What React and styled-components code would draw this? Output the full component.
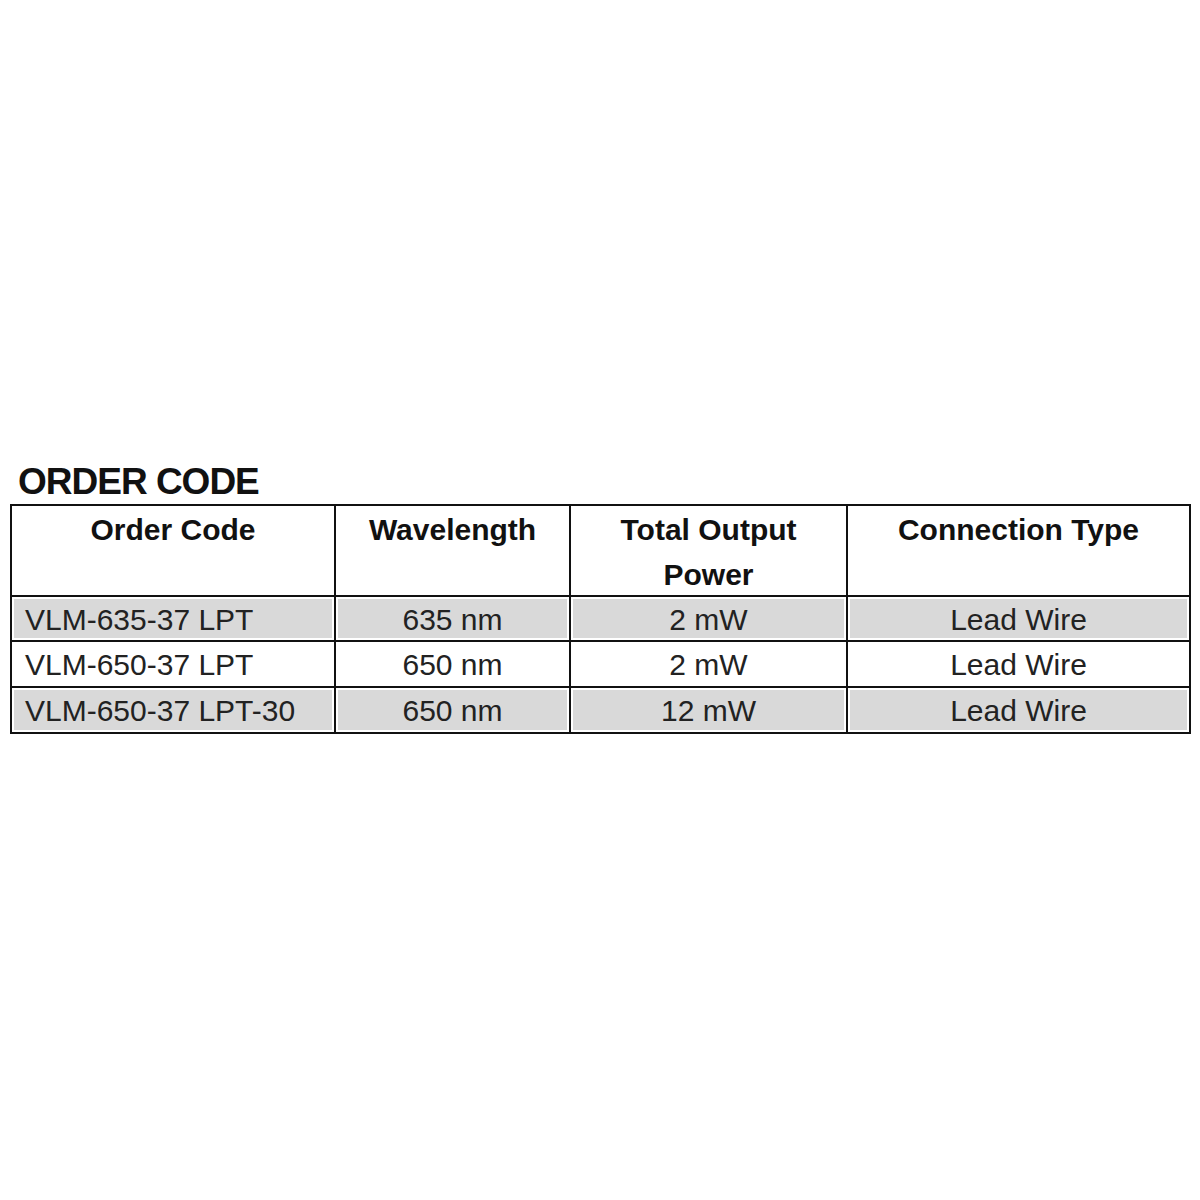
import React from 'react'
import styled, { createGlobalStyle } from 'styled-components'

const GlobalStyle = createGlobalStyle`
  html, body {
    margin: 0;
    padding: 0;
    background: #fff;
  }
  body {
    font-family: "Liberation Sans", Arial, sans-serif;
  }
`

const Page = styled.div`
  width: 1200px;
  height: 1200px;
  padding: 462px 0 0 10px;
  box-sizing: border-box;
`

const Title = styled.h2`
  margin: 0 0 2px 8px;
  font-size: 37px;
  line-height: 40px;
  font-weight: 700;
  letter-spacing: -1px;
  color: #111;
`

const Table = styled.div`
  display: grid;
  grid-template-columns: 324px 235px 277px 343px;
  grid-template-rows: 91px 45px 46px 46px;
  width: max-content;
  border-left: 2px solid #111;
  border-top: 2px solid #111;
`

const Cell = styled.div`
  box-sizing: border-box;
  border-right: 2px solid #111;
  border-bottom: 2px solid #111;
  font-size: 30px;
  line-height: 45px;
  text-align: ${p => (p.$left ? 'left' : 'center')};
  padding-left: ${p => (p.$left ? '13px' : '0')};
  background: ${p => (p.$shaded ? '#d9d9d9' : '#fff')};
  box-shadow: ${p => (p.$shaded ? 'inset 0 0 0 2px #fff' : 'none')};
  color: #222;
  white-space: nowrap;
`

const HeadCell = styled(Cell)`
  font-weight: 700;
  color: #111;
  padding-top: 1px;
  white-space: normal;
`

const headers = ['Order Code', 'Wavelength', 'Total Output Power', 'Connection Type']

const rows = [
  ['VLM-635-37 LPT', '635 nm', '2 mW', 'Lead Wire'],
  ['VLM-650-37 LPT', '650 nm', '2 mW', 'Lead Wire'],
  ['VLM-650-37 LPT-30', '650 nm', '12 mW', 'Lead Wire'],
]

export default function App() {
  return (
    <>
      <GlobalStyle />
      <Page>
        <Title>ORDER CODE</Title>
        <Table>
          {headers.map(h => (
            <HeadCell key={h}>
              {h === 'Total Output Power' ? (
                <>
                  Total Output
                  <br />
                  Power
                </>
              ) : (
                h
              )}
            </HeadCell>
          ))}
          {rows.map((row, i) =>
            row.map((val, j) => (
              <Cell key={`${i}-${j}`} $left={j === 0} $shaded={i !== 1}>
                {val}
              </Cell>
            ))
          )}
        </Table>
      </Page>
    </>
  )
}
